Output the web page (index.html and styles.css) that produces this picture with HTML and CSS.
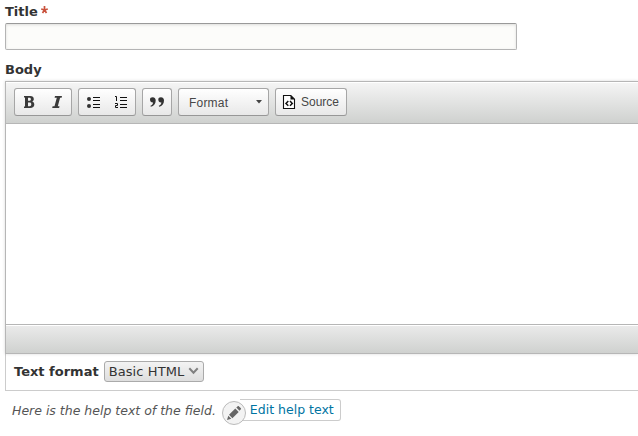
FILE: index.html
```html
<!DOCTYPE html>
<html lang="en">
<head>
  <meta charset="UTF-8">
  <meta name="viewport" content="width=device-width, initial-scale=1">
  <title>Create content</title>
  <link rel="stylesheet" href="styles.css">
</head>
<body>
  <form class="node-form">
    <label class="label" for="title">Title<svg class="required" width="7" height="8" viewBox="0 0 7 8"><path d="M3.500 0v4M.2 3l3.300 1M6.800 3L3.500 4M1.500 7L3.500 4M5.500 7L3.500 4"/></svg></label>
    <input type="text" id="title" class="form-text">

    <div class="label label-body">Body</div>
    <div class="format-wrapper">
      <div class="editor">
        <div class="toolbar">
          <div class="group">
            <button type="button" class="tool" title="Bold">
              <svg width="16" height="16" viewBox="0 0 16 16"><path fill="#3a3a3a" fill-rule="evenodd" d="M3 2h6.200c2.400 0 3.600 1.100 3.600 3 0 1.300-.6 2.100-1.700 2.600 1.500.4 2.200 1.500 2.200 2.900 0 2.300-1.500 3.500-4.100 3.500H3v-1.500h1V3.500H3zm4 1.800v3h1.500c.9 0 1.400-.6 1.400-1.500s-.5-1.500-1.400-1.500zm0 4.700v3.700h1.600c1.100 0 1.700-.7 1.700-1.900s-.6-1.800-1.700-1.800z"/></svg>
            </button>
            <button type="button" class="tool" title="Italic">
              <svg width="16" height="16" viewBox="0 0 16 16"><path fill="#3a3a3a" d="M6 2h7l-.4 1.700h-1.500L8.800 12.300h1.700L10.100 14H3.200l.4-1.700h1.900L7.800 3.700H5.600z"/></svg>
            </button>
          </div>
          <div class="group">
            <button type="button" class="tool" title="Bulleted List">
              <svg width="16" height="16" viewBox="0 0 16 16"><g fill="#333"><circle cx="4" cy="5" r="2"/><circle cx="4" cy="12" r="2"/></g><path stroke="#111" d="M8 3.500h7M8 6.500h7M8 10.500h7M8 13.500h7"/></svg>
            </button>
            <button type="button" class="tool" title="Numbered List">
              <svg width="16" height="16" viewBox="0 0 16 16"><path fill="none" stroke="#111" d="M2 2.500h1.500V7M2 9.500h2.500v2h-2v2H5M7 3.500h7M7 6.500h7M7 10.500h7M7 13.500h7"/></svg>
            </button>
          </div>
          <div class="group">
            <button type="button" class="tool" title="Block Quote">
              <svg width="16" height="16" viewBox="0 0 16 16"><path fill="#333" d="M1 5.500C1 4 2 3.200 3.600 3.200c2.200 0 3.100 1.300 3.100 3.300 0 3.200-1.700 5.500-4.900 6.200l-.3-.9c1.600-.7 2.500-1.800 2.600-3.300C2.200 8.700 1 7.400 1 5.500zM9.300 5.500c0-1.500 1-2.300 2.600-2.300 2.200 0 3.100 1.300 3.100 3.300 0 3.200-1.700 5.500-4.900 6.200l-.3-.9c1.600-.7 2.500-1.800 2.600-3.300-1.900.2-3.100-1.100-3.100-3z"/></svg>
            </button>
          </div>
          <button type="button" class="group combo">
            <span>Format</span>
            <svg width="6" height="4" viewBox="0 0 6 4"><path fill="#444" d="M0 0h6L3 3.500z"/></svg>
          </button>
          <button type="button" class="group source">
            <svg width="16" height="16" viewBox="0 0 16 16"><path fill="#fff" stroke="#111" stroke-width="1.100" d="M2.500 1.500h7.300l3.700 3.700v9.300h-11z"/><path fill="#111" d="M9.500 1v4.500H14z"/><path fill="none" stroke="#111" stroke-width="1.500" d="M7.300 7L5 9.400l2.300 2.400M9 7l2.300 2.400L9 11.800"/></svg>
            <span>Source</span>
          </button>
        </div>
        <div class="contents" contenteditable="true"></div>
        <div class="bottom"></div>
      </div>
      <div class="format-row">
        <span class="label">Text format</span>
        <button type="button" class="format-select">
          <span>Basic HTML</span>
          <svg width="11" height="8" viewBox="0 0 11 8"><path fill="none" stroke="#808080" stroke-width="2" d="M1.300 1.300l4.200 4.400 4.200-4.400"/></svg>
        </button>
      </div>
    </div>

    <div class="description">
      <em>Here is the help text of the field.</em>
      <div class="contextual">
        <span class="pencil">
          <svg width="16" height="16" viewBox="0 0 16 16"><path fill="#666" d="M1 15l1.300-4.300 3 3zM3 9.800l6.300-6.300 3.400 3.400-6.300 6.300zM10.300 2.600l1.200-1.200c.5-.5 1-.5 1.500 0l1.700 1.700c.5.500.5 1 0 1.500l-1.200 1.200z"/></svg>
        </span>
        <a href="#" class="edit-link">Edit help text</a>
      </div>
    </div>
  </form>
</body>
</html>
```
FILE: styles.css
```css
* {
  box-sizing: border-box;
}

body {
  margin: 0;
  min-height: 100vh;
  background: #fff;
  color: #333;
  font: 13px/16px "DejaVu Sans", Verdana, sans-serif;
}

button {
  font: inherit;
  color: inherit;
  margin: 0;
  padding: 0;
  border: none;
  background: none;
}

svg {
  display: block;
  flex: none;
}

.node-form {
  padding: 4px 0 0 5px;
}

.label {
  display: flex;
  font-weight: bold;
}

.required {
  margin: 2px 0 0 3px;
  fill: none;
  stroke: #c9513b;
  stroke-width: 1.7;
}

.form-text {
  display: block;
  width: 512px;
  height: 27px;
  margin-top: 3px;
  padding: 4px;
  border: 1px solid #b4b4b4;
  border-top-color: #999;
  border-radius: 2px;
  background: #fcfcfa;
  box-shadow: inset 0 1px 3px rgba(0,0,0,0.12);
}

.label-body {
  margin: 12px 0 3px;
}

.format-wrapper {
  height: 310px;
  border: 1px solid #ccc;
  border-top: none;
  border-right: none;
}

.editor {
  margin-left: -1px;
  border: 1px solid #b6b6b6;
  border-right: none;
  box-shadow: 0 0 3px rgba(0,0,0,0.15);
}

.toolbar {
  display: flex;
  gap: 6px;
  height: 42px;
  padding: 6px 8px;
  border-bottom: 1px solid #b6b6b6;
  background: linear-gradient(#f5f5f5, #cfd1cf);
  box-shadow: inset 0 1px 0 #fff;
}

.group {
  display: flex;
  align-items: center;
  height: 28px;
  border: 1px solid #a6a6a6;
  border-bottom-color: #979797;
  border-radius: 3px;
  background: linear-gradient(#fff, #e8e8e8);
}

.tool {
  padding: 0 6px;
}

.combo,
.source {
  color: #474747;
  font: 12px/17px "Liberation Sans", Arial, sans-serif;
}

.combo {
  justify-content: space-between;
  width: 91px;
  padding: 0 6px 0 10px;
  letter-spacing: 0.2px;
}

.combo span {
  padding-top: 2px;
}

.source {
  gap: 4px;
  width: 72px;
  padding-left: 5px;
}

.contents {
  height: 200px;
}

.bottom {
  height: 29px;
  border-top: 1px solid #b6b6b6;
  background: linear-gradient(#ebebeb, #cfd1cf);
  box-shadow: inset 0 1px 0 #fff;
}

.format-row {
  display: flex;
  align-items: center;
  gap: 5px;
  padding: 7px 8px;
}

.format-select {
  display: flex;
  align-items: center;
  justify-content: space-between;
  width: 100px;
  height: 21px;
  padding: 0 4px;
  border: 1px solid #aaa;
  border-radius: 3px;
  background: linear-gradient(#f3f3f3, #dedede);
}

.format-select span {
  letter-spacing: 0.1px;
}

.format-select svg {
  margin-top: -2px;
}

.description {
  display: flex;
  align-items: center;
  gap: 6px;
  height: 26px;
  margin-top: 7px;
  padding-left: 7px;
  color: #555;
  font-size: 12.5px;
}

.contextual {
  display: flex;
  align-items: center;
}

.pencil {
  display: flex;
  align-items: center;
  justify-content: center;
  width: 24px;
  height: 24px;
  margin-top: 4px;
  border: 1px solid #bbb;
  border-radius: 50%;
  background: #f3f3f3;
  z-index: 1;
}

.edit-link {
  height: 22px;
  margin: 0 0 2px -6px;
  padding: 2px 6px 0 10px;
  border: 1px solid #ccc;
  border-left: none;
  border-radius: 0 3px 3px 0;
  color: #0074a2;
  text-decoration: none;
}
```
